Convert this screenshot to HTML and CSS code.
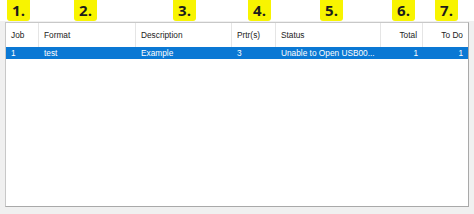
FILE: index.html
```html
<!DOCTYPE html>
<html lang="en">
<head>
    <meta charset="UTF-8">
    <title>Print Queue</title>
    <link rel="stylesheet" href="styles.css">
</head>
<body>
    <div class="badges">
        <span class="badge">1.</span>
        <span class="badge">2.</span>
        <span class="badge">3.</span>
        <span class="badge">4.</span>
        <span class="badge">5.</span>
        <span class="badge">6.</span>
        <span class="badge">7.</span>
    </div>

    <div class="panel">
        <div class="list-view">
            <div class="row header">
                <div class="cell">Job</div>
                <div class="cell">Format</div>
                <div class="cell">Description</div>
                <div class="cell">Prtr(s)</div>
                <div class="cell">Status</div>
                <div class="cell num">Total</div>
                <div class="cell num">To Do</div>
            </div>
            <div class="row item selected">
                <div class="cell">1</div>
                <div class="cell">test</div>
                <div class="cell">Example</div>
                <div class="cell">3</div>
                <div class="cell">Unable to Open USB00...</div>
                <div class="cell num">1</div>
                <div class="cell num">1</div>
            </div>
        </div>
    </div>
</body>
</html>
```

FILE: styles.css
```css
html, body {
    margin: 0;
    padding: 0;
}

body {
    width: 474px;
    height: 214px;
    background: #ffffff;
    font-family: "Liberation Sans", Arial, sans-serif;
    overflow: hidden;
}

/* numbered callouts */
.badges {
    display: flex;
    height: 21px;
    padding-left: 7px;
    background: #ffffff;
}
.badge {
    width: 23px;
    height: 21px;
    background: #f8f400;
    border-radius: 0 0 3px 3px;
    color: #1c1c1c;
    font-family: "Open Sans", "Liberation Sans", sans-serif;
    font-weight: 700;
    font-size: 15px;
    line-height: 21px;
    text-align: center;
}
.badge:nth-child(2) { margin-left: 44px; }
.badge:nth-child(3) { margin-left: 76px; }
.badge:nth-child(4) { margin-left: 52px; }
.badge:nth-child(5) { margin-left: 49px; }
.badge:nth-child(6) { margin-left: 49px; }
.badge:nth-child(7) { margin-left: 20px; }

/* window area */
.panel {
    height: 193px;
    background: #f0f0f0;
    padding: 1px 5px 0 5px;
    box-sizing: border-box;
}
.list-view {
    height: 185px;
    background: #ffffff;
    border: 1px solid #a9a9a9;
    border-top-color: #c8c8c8;
    border-left-color: #c8c8c8;
    box-sizing: border-box;
}

.row {
    display: grid;
    grid-template-columns: 33px 97px 96px 44px 105px 42px 45px;
    font-size: 8.3px;
}
.header {
    height: 24px;
    color: #222222;
}
.header .cell {
    line-height: 24px;
    border-right: 1px solid #e5e5e5;
}
.header .cell:last-child {
    border-right: none;
}
.cell {
    padding: 0 4px 0 5px;
    white-space: nowrap;
    overflow: hidden;
}
.num {
    text-align: right;
    padding-right: 5px;
}
.item {
    height: 12px;
    line-height: 12px;
}
.selected {
    background: #0a78d4;
    color: #ffffff;
}
```
